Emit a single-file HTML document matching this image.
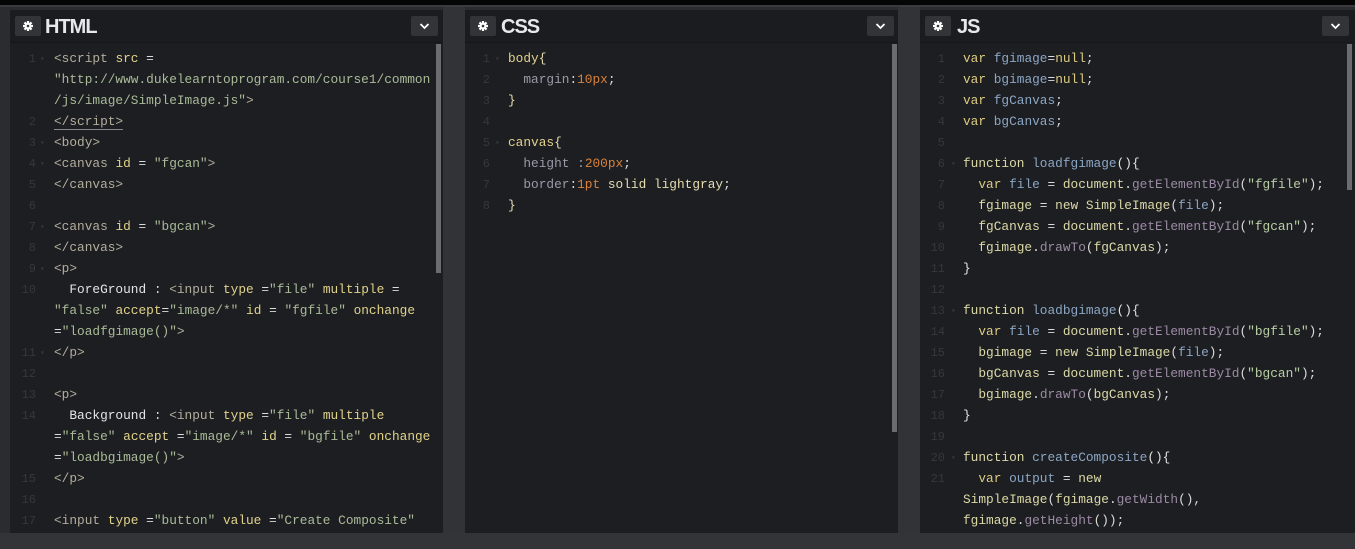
<!DOCTYPE html>
<html><head><meta charset="utf-8"><style>
*{margin:0;padding:0;box-sizing:border-box}
body{width:1355px;height:549px;background:#2b2c30;position:relative;overflow:hidden;font-family:"Liberation Mono",monospace}
.top{position:absolute;left:0;top:0;width:1355px;height:5px;background:#050505}
.top2{position:absolute;left:0;top:5px;width:1355px;height:2px;background:#3a3b3e}
.bot{position:absolute;left:0;top:533px;width:1355px;height:16px;background:#333437}
.gut{position:absolute;top:7px;height:526px;background:#323336}
.panel{position:absolute;top:10px;height:523px;background:#1d1e22}
.hdr{position:absolute;left:0;top:0;right:0;height:33px;background:#1b1c1f;border-bottom:1px solid #151618}
.gear{position:absolute;left:5px;top:6px;width:26px;height:20px;background:#333438;border-radius:2px}
.title{position:absolute;top:6px;font-family:"Liberation Sans",sans-serif;font-weight:bold;font-size:20px;color:#e8e8ea;letter-spacing:-1px}
.chev{position:absolute;top:6px;width:27px;height:20px;background:#333438;border-radius:2px}
.sb{position:absolute;width:5px;background:#6b6c70}
.ln{position:absolute;font-size:12px;color:#36373b;text-align:right;width:18px}
.fd{position:absolute;font-size:8px;color:#36373b}
.c{position:absolute;font-size:12.8px;color:#dcdcdc;white-space:pre;line-height:21px}
.t{color:#b3ad9c}.a{color:#e1d28a}.s{color:#a9bb98}.w{color:#e4e4e4}
.y{color:#e1d28a}.p{color:#9b9aa8}.o{color:#d8823c}.lw{color:#e6deaf}
.k{color:#dccb80}.b{color:#8ba6c4}.m{color:#9c8aa4}.g{color:#b9cfa4}.f{color:#dcd9a6}
</style></head><body>
<div class="top"></div><div class="top2"></div>
<div class="gut" style="left:443px;width:22px"></div>
<div class="gut" style="left:898px;width:22px"></div>

<svg width="0" height="0" style="position:absolute"><defs>
<g id="gr"><g fill="#fff"><rect x="-1.1" y="-5" width="2.2" height="10"/><rect x="-5" y="-1.1" width="10" height="2.2"/>
<rect x="-1.1" y="-5" width="2.2" height="10" transform="rotate(45)"/><rect x="-1.1" y="-5" width="2.2" height="10" transform="rotate(-45)"/></g><circle r="3.4" fill="#fff"/><circle r="1.3" fill="#333438"/></g>
<path id="cv" d="M-4,-2 L0,2 L4,-2" fill="none" stroke="#fff" stroke-width="1.8"/>
</defs></svg>

<div class="panel" style="left:10px;width:433px">
<div class="hdr"><div class="gear"><svg width="26" height="20"><use href="#gr" x="13" y="10"/></svg></div>
<div class="title" style="left:35px">HTML</div>
<div class="chev" style="left:401px"><svg width="27" height="20"><use href="#cv" x="13.5" y="10"/></svg></div></div>
<div class="sb" style="left:426px;top:34px;height:229px"></div>
</div>
<div class="panel" style="left:465px;width:433px">
<div class="hdr"><div class="gear"><svg width="26" height="20"><use href="#gr" x="13" y="10"/></svg></div>
<div class="title" style="left:36px">CSS</div>
<div class="chev" style="left:402px"><svg width="27" height="20"><use href="#cv" x="13.5" y="10"/></svg></div></div>
<div class="sb" style="left:427px;top:34px;height:388px"></div>
</div>
<div class="panel" style="left:920px;width:435px">
<div class="hdr"><div class="gear"><svg width="26" height="20"><use href="#gr" x="13" y="10"/></svg></div>
<div class="title" style="left:37px">JS</div>
<div class="chev" style="left:402px"><svg width="27" height="20"><use href="#cv" x="13.5" y="10"/></svg></div></div>
<div class="sb" style="left:427px;top:34px;height:146px"></div>
</div>

<div class="bot"></div>

<div class="c" style="left:54px;top:48px"><span class="t">&lt;script</span> <span class="a">src</span> =
<span class="s">"http://www.dukelearntoprogram.com/course1/common</span>
<span class="s">/js/image/SimpleImage.js"</span><span class="t">&gt;</span>
<span class="t" style="border-bottom:1px solid #888">&lt;/script&gt;</span>
<span class="t">&lt;body&gt;</span>
<span class="t">&lt;canvas</span> <span class="a">id</span> = <span class="s">"fgcan"</span><span class="t">&gt;</span>
<span class="t">&lt;/canvas&gt;</span>

<span class="t">&lt;canvas</span> <span class="a">id</span> = <span class="s">"bgcan"</span><span class="t">&gt;</span>
<span class="t">&lt;/canvas&gt;</span>
<span class="t">&lt;p&gt;</span>
  <span class="w">ForeGround</span> : <span class="t">&lt;input</span> <span class="a">type</span> =<span class="s">"file"</span> <span class="a">multiple</span> =
<span class="s">"false"</span> <span class="a">accept</span>=<span class="s">"image/*"</span> <span class="a">id</span> = <span class="s">"fgfile"</span> <span class="a">onchange</span>
=<span class="s">"loadfgimage()"</span><span class="t">&gt;</span>
<span class="t">&lt;/p&gt;</span>

<span class="t">&lt;p&gt;</span>
  <span class="w">Background</span> : <span class="t">&lt;input</span> <span class="a">type</span> =<span class="s">"file"</span> <span class="a">multiple</span>
=<span class="s">"false"</span> <span class="a">accept</span> =<span class="s">"image/*"</span> <span class="a">id</span> = <span class="s">"bgfile"</span> <span class="a">onchange</span>
=<span class="s">"loadbgimage()"</span><span class="t">&gt;</span>
<span class="t">&lt;/p&gt;</span>

<span class="t">&lt;input</span> <span class="a">type</span> =<span class="s">"button"</span> <span class="a">value</span> =<span class="s">"Create Composite"</span></div>

<div class="ln" style="left:18px;top:49px;line-height:21px;white-space:pre">1


2
3
4
5
6
7
8
9
10


11
12
13
14


15
16
17</div>
<div class="fd" style="left:40px;top:49px;line-height:21px;white-space:pre">▾



▾
▾


▾

▾



▾</div>

<div class="c" style="left:508px;top:48px"><span class="y">body</span><span class="lw">{</span>
  <span class="p">margin</span>:<span class="o">10px</span>;
<span class="lw">}</span>

<span class="y">canvas</span><span class="lw">{</span>
  <span class="p">height</span> <span class="p">:</span><span class="o">200px</span>;
  <span class="p">border</span>:<span class="o">1pt</span> <span class="lw">solid lightgray</span>;
<span class="lw">}</span></div>
<div class="ln" style="left:472px;top:49px;line-height:21px;white-space:pre">1
2
3
4
5
6
7
8</div>
<div class="fd" style="left:495px;top:49px;line-height:21px;white-space:pre">▾



▾</div>

<div class="c" style="left:963px;top:48px"><span class="k">var</span> <span class="b">fgimage</span>=<span class="k">null</span>;
<span class="k">var</span> <span class="b">bgimage</span>=<span class="k">null</span>;
<span class="k">var</span> <span class="b">fgCanvas</span>;
<span class="k">var</span> <span class="b">bgCanvas</span>;

<span class="f">function</span> <span class="b">loadfgimage</span><span class="w">(){</span>
  <span class="k">var</span> <span class="b">file</span> = <span class="f">document</span>.<span class="m">getElementById</span>(<span class="g">"fgfile"</span>);
  <span class="f">fgimage</span> = <span class="f">new SimpleImage</span>(<span class="b">file</span>);
  <span class="f">fgCanvas</span> = <span class="f">document</span>.<span class="m">getElementById</span>(<span class="g">"fgcan"</span>);
  <span class="f">fgimage</span>.<span class="m">drawTo</span>(<span class="f">fgCanvas</span>);
<span class="w">}</span>

<span class="f">function</span> <span class="b">loadbgimage</span><span class="w">(){</span>
  <span class="k">var</span> <span class="b">file</span> = <span class="f">document</span>.<span class="m">getElementById</span>(<span class="g">"bgfile"</span>);
  <span class="f">bgimage</span> = <span class="f">new SimpleImage</span>(<span class="b">file</span>);
  <span class="f">bgCanvas</span> = <span class="f">document</span>.<span class="m">getElementById</span>(<span class="g">"bgcan"</span>);
  <span class="f">bgimage</span>.<span class="m">drawTo</span>(<span class="f">bgCanvas</span>);
<span class="w">}</span>

<span class="f">function</span> <span class="b">createComposite</span><span class="w">(){</span>
  <span class="k">var</span> <span class="b">output</span> = <span class="f">new</span>
<span class="f">SimpleImage</span>(<span class="f">fgimage</span>.<span class="m">getWidth</span>(),
<span class="f">fgimage</span>.<span class="m">getHeight</span>());</div>
<div class="ln" style="left:927px;top:49px;line-height:21px;white-space:pre">1
2
3
4
5
6
7
8
9
10
11
12
13
14
15
16
17
18
19
20
21</div>
<div class="fd" style="left:951px;top:49px;line-height:21px;white-space:pre">




▾






▾






▾</div>
</body></html>
